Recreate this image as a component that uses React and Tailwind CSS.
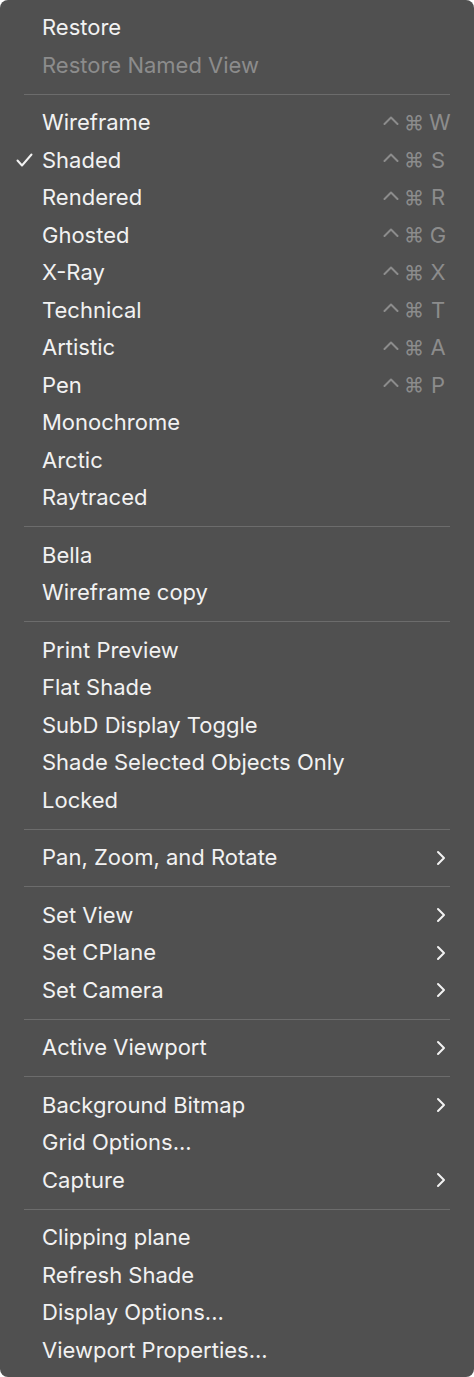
const groups = [
  [
    { label: "Restore" },
    { label: "Restore Named View", disabled: true },
  ],
  [
    { label: "Wireframe", key: "W" },
    { label: "Shaded", key: "S", checked: true },
    { label: "Rendered", key: "R" },
    { label: "Ghosted", key: "G" },
    { label: "X-Ray", key: "X" },
    { label: "Technical", key: "T" },
    { label: "Artistic", key: "A" },
    { label: "Pen", key: "P" },
    { label: "Monochrome" },
    { label: "Arctic" },
    { label: "Raytraced" },
  ],
  [{ label: "Bella" }, { label: "Wireframe copy" }],
  [
    { label: "Print Preview" },
    { label: "Flat Shade" },
    { label: "SubD Display Toggle" },
    { label: "Shade Selected Objects Only" },
    { label: "Locked" },
  ],
  [{ label: "Pan, Zoom, and Rotate", sub: true }],
  [
    { label: "Set View", sub: true },
    { label: "Set CPlane", sub: true },
    { label: "Set Camera", sub: true },
  ],
  [{ label: "Active Viewport", sub: true }],
  [
    { label: "Background Bitmap", sub: true },
    { label: "Grid Options..." },
    { label: "Capture", sub: true },
  ],
  [
    { label: "Clipping plane" },
    { label: "Refresh Shade" },
    { label: "Display Options..." },
    { label: "Viewport Properties..." },
  ],
];

const Chevron = () => (
  <svg width="12" height="16" viewBox="0 0 12 16" fill="none">
    <polyline points="3,2 9,8 3,14" stroke="#f2f2f2" strokeWidth="2" strokeLinecap="round" strokeLinejoin="round" />
  </svg>
);

const Check = () => (
  <svg width="17" height="14" viewBox="0 0 17 14" fill="none">
    <polyline points="1.5,7.5 6,12.5 15.5,1.5" stroke="#f2f2f2" strokeWidth="2" strokeLinecap="round" strokeLinejoin="round" />
  </svg>
);

const Caret = () => (
  <svg width="16" height="9" viewBox="0 0 16 9" fill="none">
    <polyline points="1.5,8 8,1.5 14.5,8" stroke="#8c8c8c" strokeWidth="2" strokeLinecap="round" strokeLinejoin="round" />
  </svg>
);

const Item = ({ item }) => (
  <div className="flex h-[37.5px] items-center pl-[16px] pr-[27px]">
    <div className="flex w-[26px] items-center">{item.checked && <Check />}</div>
    <div className={`flex-1 text-[22px] ${item.disabled ? "text-[#8c8c8c]" : "text-[#f2f2f2]"}`}>
      {item.label}
    </div>
    {item.key && (
      <div className="flex items-center text-[22px] text-[#8c8c8c]">
        <span className="mb-[5px]">
          <Caret />
        </span>
        <span className="ml-[5px] text-[20px]">⌘</span>
        <span className="ml-[5px] w-[18px] text-center">{item.key}</span>
      </div>
    )}
    {item.sub && <Chevron />}
  </div>
);

export default function App() {
  return (
    <div className="min-h-screen bg-white">
      <div
        className="w-[474px] h-[1377px] rounded-[8px] bg-[#505050] pt-[9px]"
        style={{ fontFamily: 'Inter, "DejaVu Sans", sans-serif' }}
      >
        {groups.map((group, gi) => (
          <div key={gi}>
            {gi > 0 && (
              <div className="flex h-[20px] items-center px-[24px]">
                <div className="h-px w-full bg-[#6c6c6c]" />
              </div>
            )}
            {group.map((item) => (
              <Item key={item.label} item={item} />
            ))}
          </div>
        ))}
      </div>
    </div>
  );
}
